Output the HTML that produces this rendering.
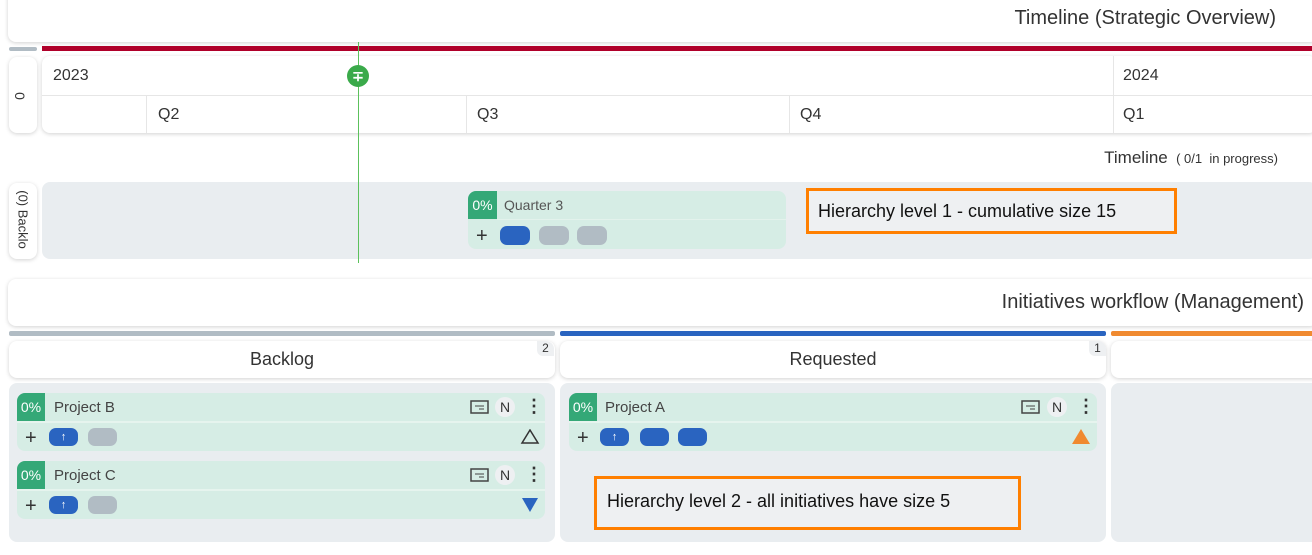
<!DOCTYPE html>
<html><head><meta charset="utf-8"><style>
*{box-sizing:border-box;margin:0;padding:0}
body{width:1312px;height:555px;overflow:hidden;background:#fff;font-family:"Liberation Sans",sans-serif;color:#333;position:relative}
.a{position:absolute}
.card{background:#fff;border-radius:8px;box-shadow:0 1px 4px rgba(0,0,0,.18)}
.band{background:#e9edf0;border-radius:8px}
.it{background:#d6ede5;border-radius:8px}
.pct{background:#34a877;color:#fff;font-size:14px;text-align:center;line-height:28px;border-radius:8px 0 0 0}
.pill{border-radius:7px;height:18px;width:30px}
.blue{background:#2a64c0}.gray{background:#b1bcc4}
.ln{background:#e6e6e6}
</style></head><body>
<div class="a card" style="left:8px;top:-6px;width:1310px;height:48px;border-radius:0 0 8px 8px"></div>
<div class="a" style="right:36px;top:7px;font-size:20px">Timeline (Strategic Overview)</div>
<div class="a" style="left:9px;top:47px;width:28px;height:4px;background:#b1bcc4;border-radius:2px"></div>
<div class="a" style="left:42px;top:46px;width:1275px;height:5px;background:#b0002a"></div>
<div class="a card" style="left:9px;top:57px;width:28px;height:76px"></div>
<div class="a" style="left:16px;top:88px;font-size:14px;transform:rotate(90deg)">0</div>
<div class="a card" style="left:42px;top:56px;width:1275px;height:77px"></div>
<div class="a ln" style="left:42px;top:95px;width:1275px;height:1px"></div>
<div class="a ln" style="left:146px;top:96px;width:1px;height:37px"></div>
<div class="a ln" style="left:466px;top:96px;width:1px;height:37px"></div>
<div class="a ln" style="left:789px;top:96px;width:1px;height:37px"></div>
<div class="a ln" style="left:1113px;top:56px;width:1px;height:77px"></div>
<div class="a" style="left:53px;top:67px;font-size:16px">2023</div>
<div class="a" style="left:1123px;top:67px;font-size:16px">2024</div>
<div class="a" style="left:158px;top:106px;font-size:16px">Q2</div>
<div class="a" style="left:477px;top:106px;font-size:16px">Q3</div>
<div class="a" style="left:800px;top:106px;font-size:16px">Q4</div>
<div class="a" style="left:1123px;top:106px;font-size:16px">Q1</div>
<div class="a" style="right:34px;top:148px;font-size:17px">Timeline <span style="font-size:13px">&nbsp;( 0/1&nbsp; in progress)</span></div>
<div class="a card" style="left:9px;top:183px;width:28px;height:76px"></div>
<div class="a" style="left:-12px;top:212px;width:70px;font-size:13px;transform:rotate(90deg);white-space:nowrap;overflow:hidden;text-align:center">(0) Backlo</div>
<div class="a band" style="left:42px;top:182px;width:1275px;height:77px"></div>
<div class="a it" style="left:468px;top:191px;width:318px;height:58px"></div>
<div class="a ln" style="left:497px;top:219px;width:289px;height:1px;background:#e3f2ec"></div>
<div class="a pct" style="left:468px;top:191px;width:29px;height:28px">0%</div>
<div class="a" style="left:504px;top:197px;font-size:14px;color:#555">Quarter 3</div>
<div class="a" style="left:476px;top:225px;font-size:20px">+</div>
<div class="a pill blue" style="left:500px;top:226px;height:19px"></div>
<div class="a pill gray" style="left:539px;top:226px;height:19px"></div>
<div class="a pill gray" style="left:577px;top:226px;height:19px"></div>
<div class="a" style="left:806px;top:188px;width:371px;height:46px;border:3px solid #ff7f00;background:#eef0f2;font-size:18px;padding:10px 0 0 9px;color:#111">Hierarchy level 1 - cumulative size 15</div>
<div class="a" style="left:358px;top:42px;width:1px;height:221px;background:#5cc15c"></div>
<div class="a" style="left:347px;top:65px;width:22px;height:22px;border-radius:50%;background:#3aaa4a;color:#fff;font-size:14px;text-align:center;line-height:22px;font-weight:bold">∓</div>
<div class="a card" style="left:8px;top:279px;width:1310px;height:47px"></div>
<div class="a" style="right:8px;top:291px;font-size:20px">Initiatives workflow (Management)</div>
<div class="a" style="left:9px;top:331px;width:546px;height:5px;background:#b1bcc4;border-radius:2px"></div>
<div class="a" style="left:560px;top:331px;width:546px;height:5px;background:#2a64c0;border-radius:2px"></div>
<div class="a" style="left:1111px;top:331px;width:210px;height:5px;background:#f08a30;border-radius:2px"></div>
<div class="a card" style="left:9px;top:341px;width:546px;height:37px"></div>
<div class="a card" style="left:560px;top:341px;width:546px;height:37px"></div>
<div class="a card" style="left:1111px;top:341px;width:210px;height:37px"></div>
<div class="a" style="left:9px;top:349px;width:546px;text-align:center;font-size:18px">Backlog</div>
<div class="a" style="left:560px;top:349px;width:546px;text-align:center;font-size:18px">Requested</div>
<div class="a" style="left:537px;top:341px;width:17px;height:15px;background:#eef0f2;font-size:12px;text-align:center;border-radius:0 8px 0 6px">2</div>
<div class="a" style="left:1089px;top:341px;width:17px;height:15px;background:#eef0f2;font-size:12px;text-align:center;border-radius:0 8px 0 6px">1</div>
<div class="a band" style="left:9px;top:383px;width:546px;height:159px"></div>
<div class="a band" style="left:560px;top:383px;width:546px;height:159px"></div>
<div class="a band" style="left:1111px;top:383px;width:210px;height:159px"></div>
<div class="a" style="left:594px;top:476px;width:427px;height:54px;border:3px solid #ff7f00;background:#eef0f2;font-size:18px;padding:12px 0 0 10px;color:#111">Hierarchy level 2 - all initiatives have size 5</div>

<div class="a it" style="left:17px;top:393px;width:528px;height:58px"></div>
<div class="a it" style="left:17px;top:461px;width:528px;height:58px"></div>
<div class="a it" style="left:569px;top:393px;width:528px;height:58px"></div>
<div class="a" style="left:17px;top:421px;width:528px;height:2px;background:#e6f4ee"></div>
<div class="a" style="left:17px;top:489px;width:528px;height:2px;background:#e6f4ee"></div>
<div class="a" style="left:569px;top:421px;width:528px;height:2px;background:#e6f4ee"></div>
<div class="a pct" style="left:17px;top:393px;width:28px;height:28px">0%</div>
<div class="a pct" style="left:17px;top:461px;width:28px;height:28px">0%</div>
<div class="a pct" style="left:569px;top:393px;width:28px;height:28px">0%</div>
<div class="a" style="left:54px;top:399px;font-size:15px;color:#444">Project B</div>
<div class="a" style="left:54px;top:467px;font-size:15px;color:#444">Project C</div>
<div class="a" style="left:605px;top:399px;font-size:15px;color:#444">Project A</div>

<svg class="a" style="left:470px;top:399px" width="20" height="16"><rect x="1" y="2" width="17" height="12" fill="none" stroke="#444" stroke-width="1.5"/><line x1="5" y1="7" x2="14" y2="7" stroke="#444"/><line x1="9" y1="10" x2="14" y2="10" stroke="#444"/></svg>
<svg class="a" style="left:470px;top:467px" width="20" height="16"><rect x="1" y="2" width="17" height="12" fill="none" stroke="#444" stroke-width="1.5"/><line x1="5" y1="7" x2="14" y2="7" stroke="#444"/><line x1="9" y1="10" x2="14" y2="10" stroke="#444"/></svg>
<svg class="a" style="left:1021px;top:399px" width="20" height="16"><rect x="1" y="2" width="17" height="12" fill="none" stroke="#444" stroke-width="1.5"/><line x1="5" y1="7" x2="14" y2="7" stroke="#444"/><line x1="9" y1="10" x2="14" y2="10" stroke="#444"/></svg>
<div class="a" style="left:495px;top:397px;width:20px;height:20px;border-radius:50%;background:#eef0f2;font-size:14px;text-align:center;line-height:20px">N</div>
<div class="a" style="left:495px;top:465px;width:20px;height:20px;border-radius:50%;background:#eef0f2;font-size:14px;text-align:center;line-height:20px">N</div>
<div class="a" style="left:1047px;top:397px;width:20px;height:20px;border-radius:50%;background:#eef0f2;font-size:14px;text-align:center;line-height:20px">N</div>
<div class="a" style="left:522px;top:396px;width:24px;text-align:center;font-size:18px;font-weight:bold">⋮</div>
<div class="a" style="left:522px;top:464px;width:24px;text-align:center;font-size:18px;font-weight:bold">⋮</div>
<div class="a" style="left:1074px;top:396px;width:24px;text-align:center;font-size:18px;font-weight:bold">⋮</div>

<div class="a" style="left:25px;top:427px;font-size:20px">+</div>
<div class="a" style="left:25px;top:495px;font-size:20px">+</div>
<div class="a" style="left:577px;top:427px;font-size:20px">+</div>
<div class="a pill blue" style="left:49px;top:428px;width:29px;color:#fff;font-size:11px;text-align:center;line-height:18px">↑</div>
<div class="a pill blue" style="left:49px;top:496px;width:29px;color:#fff;font-size:11px;text-align:center;line-height:18px">↑</div>
<div class="a pill blue" style="left:600px;top:428px;width:29px;color:#fff;font-size:11px;text-align:center;line-height:18px">↑</div>
<div class="a pill gray" style="left:88px;top:428px;width:29px"></div>
<div class="a pill gray" style="left:88px;top:496px;width:29px"></div>
<div class="a pill blue" style="left:640px;top:428px;width:29px"></div>
<div class="a pill blue" style="left:678px;top:428px;width:29px"></div>
<svg class="a" style="left:520px;top:429px" width="20" height="16"><polygon points="10,1 18,14 2,14" fill="none" stroke="#333" stroke-width="1.5"/></svg>
<svg class="a" style="left:520px;top:497px" width="20" height="16"><polygon points="2,1 18,1 10,15" fill="#2a64c0"/></svg>
<svg class="a" style="left:1071px;top:429px" width="20" height="16"><polygon points="10,0 19,15 1,15" fill="#f08a30"/></svg>
</body></html>
